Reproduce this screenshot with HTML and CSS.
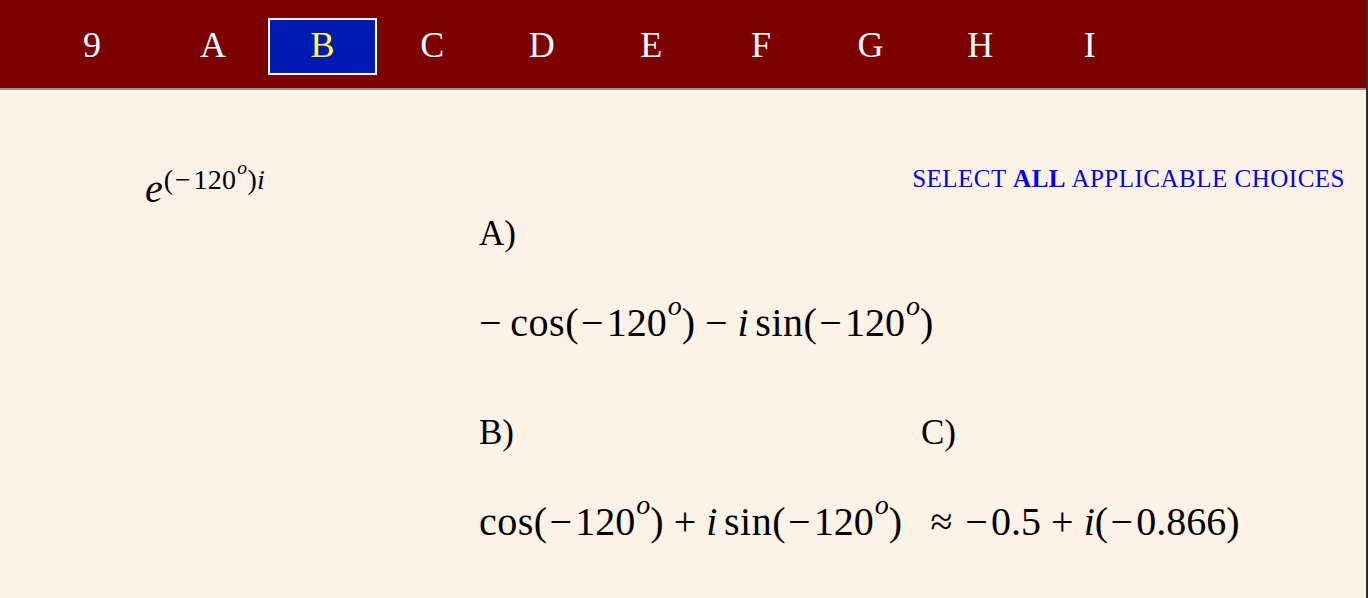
FILE: index.html
```html
<!DOCTYPE html>
<html lang="en">
<head>
<meta charset="utf-8">
<title>Question 9 B</title>
<link rel="stylesheet" href="styles.css">
</head>
<body>
<div class="frame">
  <nav class="nav">
    <div class="nav-item nav-num">9</div>
    <div class="nav-item">A</div>
    <div class="nav-item nav-active">B</div>
    <div class="nav-item">C</div>
    <div class="nav-item">D</div>
    <div class="nav-item">E</div>
    <div class="nav-item">F</div>
    <div class="nav-item">G</div>
    <div class="nav-item">H</div>
    <div class="nav-item">I</div>
  </nav>
  <main class="page">
    <div class="question">
      <span class="math-q"><i class="var">e</i><sup class="q-sup">(<span class="um">−</span>120<sup class="deg">o</sup>)<i class="var">i</i></sup></span>
    </div>
    <div class="answers">
      <div class="instr">SELECT <b>ALL</b> APPLICABLE CHOICES</div>
      <div class="choices">
        <div class="choice choice-wide">
          <div class="label">A)</div>
          <div class="math"><span class="lead">−</span><span class="fn">cos</span>(<span class="um">−</span>120<sup class="deg">o</sup>)<span class="bin">−</span><i class="var">i</i><span class="fn fn-after">sin</span>(<span class="um">−</span>120<sup class="deg">o</sup>)</div>
        </div>
        <div class="choice">
          <div class="label">B)</div>
          <div class="math"><span class="fn">cos</span>(<span class="um">−</span>120<sup class="deg">o</sup>)<span class="bin">+</span><i class="var">i</i><span class="fn fn-after">sin</span>(<span class="um">−</span>120<sup class="deg">o</sup>)</div>
        </div>
        <div class="choice">
          <div class="label">C)</div>
          <div class="math"><span class="rel">≈</span><span class="um">−</span>0.5<span class="bin">+</span><i class="var">i</i>(<span class="um">−</span>0.866)</div>
        </div>
      </div>
    </div>
  </main>
</div>
</body>
</html>
```

FILE: styles.css
```css
html, body {
  margin: 0;
  padding: 0;
}
body {
  background: #2e2e2e;
  font-family: "Liberation Serif", "Times New Roman", serif;
}
.frame {
  width: 1366px;
  height: 598px;
  background: #fdf2e6;
  overflow: hidden;
}
.nav {
  height: 70px;
  background: #7c0000;
  border-bottom: 2px solid #959595;
  display: flex;
  align-items: flex-start;
  padding: 18px 0 0 37px;
  box-sizing: content-box;
}
.nav-item {
  width: 109.6px;
  height: 57px;
  line-height: 50px;
  box-sizing: border-box;
  text-align: center;
  color: #ffffff;
  font-size: 36px;
  border: 2px solid transparent;
}
.nav-num {
  width: 110px;
  margin-right: 11.2px;
}
.nav-active {
  background: #001bb4;
  border-color: #ffffff;
  color: #ffff3c;
}
.page {
  display: grid;
  grid-template-columns: 479px 1fr;
}
.question {
  padding: 78px 0 0 145px;
  font-size: 40px;
  line-height: 40px;
  color: #000;
}
.var {
  font-style: italic;
}
.q-sup {
  font-size: 28px;
  line-height: 0;
  vertical-align: 13px;
  letter-spacing: 0.3px;
}
.question .var {
  margin-right: 1px;
}
.deg {
  font-style: italic;
  font-size: 0.7em;
  line-height: 0;
  vertical-align: 0.75em;
  margin-left: 1px;
}
.um {
  margin: 0 0.08em 0 0.06em;
}
.answers {
  display: flex;
  flex-direction: column;
}
.instr {
  margin-top: 77px;
  padding-right: 21px;
  text-align: right;
  font-size: 25px;
  line-height: 24px;
  letter-spacing: 0.5px;
  color: #0000f5;
}
.choices {
  display: grid;
  grid-template-columns: 442px 1fr;
  margin-top: 23px;
}
.choice-wide {
  grid-column: 1 / 3;
}
.label {
  font-size: 35px;
  line-height: 40px;
  color: #000;
}
.math {
  font-size: 40px;
  line-height: 50px;
  margin-top: 44px;
  margin-bottom: 65px;
  white-space: nowrap;
  color: #000;
}
.fn {
  letter-spacing: 0.5px;
}
.lead {
  margin-right: 0.22em;
}
.bin {
  margin: 0 0.25em;
}
.rel {
  margin: 0 0.26em 0 0.24em;
}
.fn-after {
  margin-left: 0.167em;
}
```
